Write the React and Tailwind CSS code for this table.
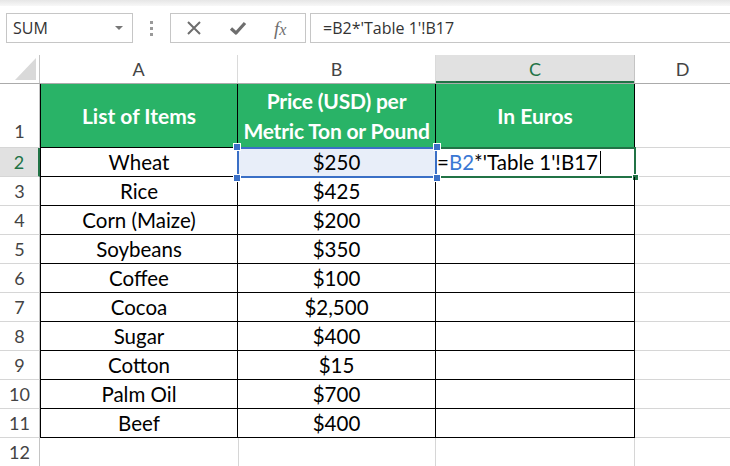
import React from 'react';

const items = [
  ['Wheat', '$250'],
  ['Rice', '$425'],
  ['Corn (Maize)', '$200'],
  ['Soybeans', '$350'],
  ['Coffee', '$100'],
  ['Cocoa', '$2,500'],
  ['Sugar', '$400'],
  ['Cotton', '$15'],
  ['Palm Oil', '$700'],
  ['Beef', '$400'],
];

function Handle({ className }) {
  return <span className={`absolute w-[6px] h-[6px] bg-[#3a6fc6] outline outline-1 outline-white ${className}`} />;
}

function FormulaBar() {
  return (
    <div className="flex items-start pl-[6px] pt-[7px] h-[49px]">
      {/* name box */}
      <div className="flex items-center justify-between w-[127px] h-[30px] border border-[#c6c6c6] pl-[6px] pr-[9px]">
        <span className="text-[16px] text-[#333] font-['Open_Sans',sans-serif]">SUM</span>
        <span className="w-0 h-0 border-l-[4px] border-r-[4px] border-t-[4px] border-l-transparent border-r-transparent border-t-[#777]" />
      </div>
      {/* dots */}
      <div className="flex flex-col gap-[3px] w-[37px] h-[30px] items-center justify-center">
        <span className="w-[3px] h-[3px] bg-[#9a9a9a]" />
        <span className="w-[3px] h-[3px] bg-[#9a9a9a]" />
        <span className="w-[3px] h-[3px] bg-[#9a9a9a]" />
      </div>
      {/* buttons */}
      <div className="flex items-center w-[136px] h-[30px] border border-[#c6c6c6] pl-[13px] gap-[24px]">
        <svg width="20" height="20" viewBox="0 0 20 20">
          <path d="M4 4 L16 16 M16 4 L4 16" stroke="#6e6e6e" strokeWidth="2" fill="none" />
        </svg>
        <svg width="20" height="20" viewBox="0 0 20 20">
          <path d="M3 10.5 L8 15 L17 5" stroke="#6e6e6e" strokeWidth="3.2" fill="none" strokeLinejoin="round" />
        </svg>
        <span className="font-['Liberation_Serif',serif] italic text-[19px] text-[#6e6e6e] leading-none ml-[2px]">
          f<span className="text-[16px]">x</span>
        </span>
      </div>
      {/* formula input */}
      <div className="flex items-center flex-1 h-[30px] ml-[4px] border border-r-0 border-[#c6c6c6] pl-[12px]">
        <span className="text-[16px] text-[#333] font-['Open_Sans',sans-serif]">=B2*'Table 1'!B17</span>
      </div>
    </div>
  );
}

function ColumnHeaders() {
  const cols = [
    { l: 'A', w: 'w-[198px]' },
    { l: 'B', w: 'w-[198px]' },
    { l: 'C', w: 'w-[199px]', active: true },
  ];
  return (
    <div className="flex h-[29px] border-b border-[#ababab]">
      <div className="relative w-[40px] border-r border-[#c4c4c4]">
        <svg className="absolute left-[15px] top-[3px]" width="22" height="22" viewBox="0 0 22 22">
          <path d="M21 0 L21 22 L0 22 Z" fill="#d9d9d9" />
        </svg>
      </div>
      {cols.map((c) => (
        <div
          key={c.l}
          className={`${c.w} flex items-center justify-center text-[18px] border-r ${
            c.active
              ? 'bg-[#e1e1e1] text-[#217346] border-[#c4c4c4] shadow-[inset_0_-2px_0_#217346]'
              : 'text-[#444] border-[#dadada]'
          }`}
        >
          {c.l}
        </div>
      ))}
      <div className="flex-1 flex items-center justify-center text-[18px] text-[#444]">D</div>
    </div>
  );
}

function RowHeader({ n, h, active, bottom }) {
  return (
    <div
      className={`w-[40px] ${h} flex justify-center ${bottom ? 'items-end pb-[2px]' : 'items-center'} text-[18px] border-b border-[#d6d6d6] ${
        active
          ? 'bg-[#e1e1e1] text-[#217346] border-r-2 border-r-[#217346]'
          : 'text-[#444] border-r border-r-[#c4c4c4]'
      }`}
    >
      {n}
    </div>
  );
}

export default function App() {
  return (
    <div className="w-[730px] h-[466px] overflow-hidden bg-white font-['Lato',sans-serif]">
      <div className="h-[6px] bg-gradient-to-b from-[#e6e6e6] to-[#f8f8f8]" />
      <FormulaBar />
      <ColumnHeaders />

      {/* row 1 */}
      <div className="flex">
        <RowHeader n={1} h="h-[64px]" bottom />
        <div className="w-[198px] h-[64px] flex items-center justify-center bg-[#29b367] text-white font-bold text-[21px] border-l border-r border-b border-black">
          List of Items
        </div>
        <div className="w-[198px] h-[64px] flex items-center justify-center text-center leading-[30px] bg-[#29b367] text-white font-bold text-[21px] tracking-[-0.2px] border-r border-b border-black">
          Price (USD) per<br />Metric Ton or Pound
        </div>
        <div className="w-[199px] h-[64px] flex items-center justify-center bg-[#29b367] text-white font-bold text-[21px] border-r border-b border-black">
          In Euros
        </div>
        <div className="flex-1 h-[64px] border-b border-[#d6d6d6]" />
      </div>

      {items.map(([name, price], i) => {
        const active = i === 0;
        return (
          <div key={name} className="flex">
            <RowHeader n={i + 2} h="h-[29px]" active={active} />
            <div className="w-[198px] h-[29px] flex items-center justify-center text-[20.5px] text-black border-l border-r border-b border-black">
              {name}
            </div>
            <div
              className={`relative w-[198px] h-[29px] flex items-center justify-center text-[20.5px] text-black border-r border-b border-black ${
                active ? 'bg-[#e8eef9]' : ''
              }`}
            >
              {price}
              {active && (
                <>
                  <span className="absolute -left-[1px] -top-[1px] -right-[2px] -bottom-[2px] border-2 border-[#3a6fc6] z-10" />
                  <Handle className="-left-[4px] -top-[4px] z-20" />
                  <Handle className="-right-[5px] -top-[4px] z-20" />
                  <Handle className="-left-[4px] -bottom-[5px] z-20" />
                  <Handle className="-right-[5px] -bottom-[5px] z-20" />
                </>
              )}
            </div>
            <div className="relative w-[199px] h-[29px] flex items-center text-[20.5px] text-black border-r border-b border-black">
              {active && (
                <>
                  <span className="absolute -left-[1px] -top-[1px] -right-[2px] -bottom-[2px] border-2 border-[#217346]" />
                  <span className="pl-[1px] flex items-center">
                    =<span className="text-[#3a78d4]">B2</span>*'Table 1'!B17
                    <span className="inline-block w-[1px] h-[23px] bg-black ml-[2px]" />
                  </span>
                  <span className="absolute -right-[4px] -bottom-[4px] w-[5px] h-[5px] bg-[#217346] outline outline-1 outline-white" />
                </>
              )}
            </div>
            <div className="flex-1 h-[29px] border-b border-[#d6d6d6]" />
          </div>
        );
      })}

      {/* row 12 */}
      <div className="flex">
        <RowHeader n={12} h="h-[29px]" />
        <div className="w-[198px] h-[29px] border-r border-b border-[#d6d6d6] ml-[1px] -mr-[1px]" />
        <div className="w-[198px] h-[29px] border-r border-b border-[#d6d6d6]" />
        <div className="w-[199px] h-[29px] border-r border-b border-[#d6d6d6]" />
        <div className="flex-1 h-[29px] border-b border-[#d6d6d6]" />
      </div>
    </div>
  );
}
